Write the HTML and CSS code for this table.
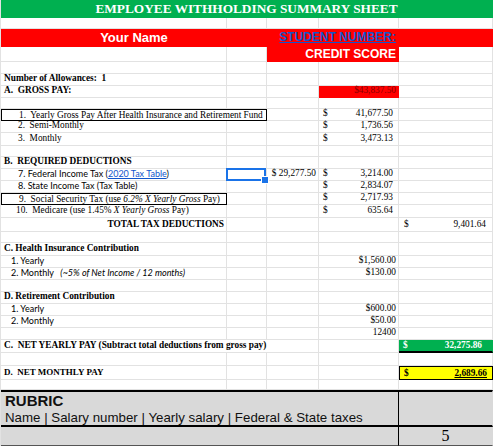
FILE: index.html
```html
<!DOCTYPE html>
<html>
<head>
<meta charset="utf-8">
<title>Employee Withholding Summary Sheet</title>
<link rel="stylesheet" href="styles.css">
</head>
<body>
<div class="sheet">
  <!-- R1 -->
  <div class="c title s5">EMPLOYEE WITHHOLDING SUMMARY SHEET</div>
  <!-- R2 -->
  <div class="c"></div><div class="c"></div><div class="c"></div><div class="c"></div><div class="c"></div>
  <!-- R3 -->
  <div class="c red s2 name">Your Name</div>
  <div class="c red s2 student"><span class="slink">STUDENT NUMBER:</span></div>
  <div class="c red"></div>
  <!-- R4 -->
  <div class="c"></div><div class="c"></div>
  <div class="c red s2 credit">CREDIT SCORE</div>
  <div class="c"></div>
  <!-- R5 -->
  <div class="c"></div><div class="c"></div><div class="c"></div><div class="c"></div><div class="c"></div>
  <!-- R6 -->
  <div class="c b">Number of Allowances:&nbsp; 1</div><div class="c"></div><div class="c"></div><div class="c"></div><div class="c"></div>
  <!-- R7 -->
  <div class="c b">A.&nbsp; GROSS PAY:</div><div class="c"></div><div class="c"></div>
  <div class="c red num gross">$43,837.50</div><div class="c"></div>
  <!-- R8 -->
  <div class="c"></div><div class="c"></div><div class="c"></div><div class="c"></div><div class="c"></div>
  <!-- R9 -->
  <div class="c s2 box in">1.&nbsp; Yearly Gross Pay After Health Insurance and Retirement Fund</div>
  <div class="c"></div>
  <div class="c acc"><span>$</span><span>41,677.50</span></div><div class="c"></div>
  <!-- R10 -->
  <div class="c in">2.&nbsp; Semi-Monthly</div><div class="c"></div><div class="c"></div>
  <div class="c acc"><span>$</span><span>1,736.56</span></div><div class="c"></div>
  <!-- R11 -->
  <div class="c in">3.&nbsp; Monthly</div><div class="c"></div><div class="c"></div>
  <div class="c acc"><span>$</span><span>3,473.13</span></div><div class="c"></div>
  <!-- R12 -->
  <div class="c"></div><div class="c"></div><div class="c"></div><div class="c"></div><div class="c"></div>
  <!-- R13 -->
  <div class="c b">B.&nbsp; REQUIRED DEDUCTIONS</div><div class="c"></div><div class="c"></div><div class="c"></div><div class="c"></div>
  <!-- R14 -->
  <div class="c sans in"><span>7. Federal Income Tax (<span class="link">2020 Tax Table</span>)</span></div>
  <div class="c sel"></div>
  <div class="c num">$ 29,277.50</div>
  <div class="c acc"><span>$</span><span>3,214.00</span></div><div class="c"></div>
  <!-- R15 -->
  <div class="c sans in">8. State Income Tax (Tax Table)</div><div class="c"></div><div class="c"></div>
  <div class="c acc"><span>$</span><span>2,834.07</span></div><div class="c"></div>
  <!-- R16 -->
  <div class="c box in"><span>9.&nbsp; Social Security Tax (use <i>6.2% X Yearly Gross</i> Pay)</span></div><div class="c"></div><div class="c"></div>
  <div class="c acc"><span>$</span><span>2,717.93</span></div><div class="c"></div>
  <!-- R17 -->
  <div class="c in10"><span>10.&nbsp; Medicare (use 1.45% <i>X Yearly Gross</i> Pay)</span></div><div class="c"></div><div class="c"></div>
  <div class="c acc"><span>$</span><span>635.64</span></div><div class="c"></div>
  <!-- R18 -->
  <div class="c b num">TOTAL TAX DEDUCTIONS</div><div class="c"></div><div class="c"></div><div class="c"></div>
  <div class="c acc acce"><span>$</span><span>9,401.64</span></div>
  <!-- R19 -->
  <div class="c"></div><div class="c"></div><div class="c"></div><div class="c"></div><div class="c"></div>
  <!-- R20 -->
  <div class="c b">C. Health Insurance Contribution</div><div class="c"></div><div class="c"></div><div class="c"></div><div class="c"></div>
  <!-- R21 -->
  <div class="c sans inh">1. Yearly</div><div class="c"></div><div class="c"></div>
  <div class="c num">$1,560.00</div><div class="c"></div>
  <!-- R22 -->
  <div class="c sans inh"><span>2. Monthly&nbsp; <i class="note">(~5% of Net Income / 12 months)</i></span></div><div class="c"></div><div class="c"></div>
  <div class="c num">$130.00</div><div class="c"></div>
  <!-- R23 -->
  <div class="c"></div><div class="c"></div><div class="c"></div><div class="c"></div><div class="c"></div>
  <!-- R24 -->
  <div class="c b">D. Retirement Contribution</div><div class="c"></div><div class="c"></div><div class="c"></div><div class="c"></div>
  <!-- R25 -->
  <div class="c sans inh">1. Yearly</div><div class="c"></div><div class="c"></div>
  <div class="c num">$600.00</div><div class="c"></div>
  <!-- R26 -->
  <div class="c sans inh">2. Monthly</div><div class="c"></div><div class="c"></div>
  <div class="c num">$50.00</div><div class="c"></div>
  <!-- R27 -->
  <div class="c"></div><div class="c"></div><div class="c"></div>
  <div class="c num">12400</div><div class="c"></div>
  <!-- R28 -->
  <div class="c s3 b">C.&nbsp; NET YEARLY PAY (Subtract total deductions from gross pay)</div>
  <div class="c"></div>
  <div class="c acc green"><span>$</span><span>32,275.86</span></div>
  <!-- R29 -->
  <div class="c"></div><div class="c"></div><div class="c"></div><div class="c"></div><div class="c"></div>
  <!-- R30 -->
  <div class="c b small">D.&nbsp; NET MONTHLY PAY</div><div class="c"></div><div class="c"></div><div class="c"></div>
  <div class="c acc yellow"><span>$</span><span class="u">2,689.66</span></div>
  <!-- R31 -->
  <div class="c"></div><div class="c"></div><div class="c"></div><div class="c"></div><div class="c"></div>
  <!-- R32 -->
  <div class="c s4 rub">
    <span class="rt">RUBRIC</span>
    <span class="rs">Name | Salary number | Yearly salary | Federal &amp; State taxes</span>
  </div>
  <div class="c rube"></div>
  <!-- R33 -->
  <div class="c s4 grayl"></div>
  <div class="c grayr score">5</div>
</div>
</body>
</html>
```
FILE: styles.css
```css
* {
  box-sizing: border-box;
  margin: 0;
  padding: 0;
}

body {
  margin: 0;
  background: #fff;
  color: #000;
  font-family: "Liberation Serif", "Times New Roman", serif;
}

.sheet {
  display: grid;
  grid-template-columns: 226px 40px 52px 80px 94px;
  grid-template-rows: 18px 11px 18px 15px 12px 12px 12px 11px 12px 12px 13px 11px 12px 12px 12px 12px 13px 14px 11px 13px 12px 12px 12px 12px 12px 12px 12px 13px 13px 14px 10px 37px 19px;
  width: 493px;
  border-left: 1px solid #e2e2e2;
}

.c {
  display: flex;
  align-items: flex-end;
  min-width: 0;
  padding: 0 2px 1px 3px;
  border-right: 1px solid #e2e2e2;
  border-bottom: 1px solid #e2e2e2;
  font-size: 9.3px;
  line-height: 11px;
  white-space: nowrap;
}

.s2 { grid-column: span 2; }
.s3 { grid-column: span 3; }
.s4 { grid-column: span 4; }
.s5 { grid-column: span 5; }

.title {
  justify-content: center;
  align-items: center;
  padding: 0;
  background: #00b050;
  border-color: #00b050;
  color: #fff;
  font-weight: bold;
  font-size: 13.3px;
  line-height: 15px;
}

.red {
  background: #ff0000;
  border-color: #ff0000;
}

.name {
  justify-content: center;
  align-items: center;
  color: #fff;
  font: bold 13px/15px "Liberation Sans", Arial, sans-serif;
}

.student {
  justify-content: flex-end;
  align-items: center;
  font: bold 12px/14px "Liberation Sans", Arial, sans-serif;
}

.slink {
  color: #1155cc;
  text-decoration: underline;
}

.credit {
  justify-content: flex-end;
  align-items: center;
  color: #fff;
  font: bold 12px/14px "Liberation Sans", Arial, sans-serif;
}

.b { font-weight: bold; }

.num { justify-content: flex-end; }

.gross { color: #8a0000; }

.in { padding-left: 17px; }
.in10 { padding-left: 15px; }
.inh { padding-left: 10px; }

.sans {
  font-family: Lato, "Liberation Sans", sans-serif;
  font-size: 9px;
}

.note {
  font-size: 9px;
  margin-left: 2px;
}

.link {
  color: #1155cc;
  text-decoration: underline;
}

.box {
  border: 1px solid #000;
  padding-bottom: 0;
  line-height: 10px;
}

.acc {
  justify-content: space-between;
  padding: 0 5px 1px 4px;
}

.acce { padding: 0 6px 1px 5px; }

.sel { position: relative; }

.sel::after {
  content: "";
  position: absolute;
  left: -1px;
  top: -1px;
  right: 0;
  bottom: -1px;
  border: 2px solid #1a73e8;
}

.sel::before {
  content: "";
  position: absolute;
  right: -3px;
  bottom: -4px;
  width: 6px;
  height: 6px;
  background: #1a73e8;
  border: 1px solid #fff;
  z-index: 1;
}

.green {
  background: #00b050;
  border-right-color: #00b050;
  border-bottom: 2px solid #000;
  color: #fff;
  font-weight: bold;
  padding: 0 10px 0 4px;
}

.small { font-size: 9px; }

.yellow {
  background: #ffff00;
  border: 1px solid #000;
  font-weight: bold;
  padding: 0 5px 0 4px;
}

.u { text-decoration: underline; }

.rub {
  flex-direction: column;
  justify-content: flex-end;
  align-items: flex-start;
  padding: 0 0 0 4px;
  background: #d9d9d9;
  border-top: 2px solid #000;
  border-bottom: 2px solid #000;
  border-right: 1px solid #000;
  font-family: "Liberation Sans", Arial, sans-serif;
  color: #111;
}

.rt {
  font: bold 15px/17px "Liberation Sans", Arial, sans-serif;
}

.rs {
  margin-top: 1px;
  margin-bottom: -1px;
  font: 13.3px/16px "Liberation Sans", Arial, sans-serif;
}

.rube {
  background: #d9d9d9;
  border-top: 2px solid #000;
  border-bottom: 2px solid #000;
  border-right-color: #d9d9d9;
}

.grayl {
  background: #d9d9d9;
  border-right: 1px solid #000;
  border-bottom: 1px solid #555;
}

.grayr {
  background: #d9d9d9;
  border-right-color: #d9d9d9;
  border-bottom: 1px solid #555;
}

.score {
  justify-content: center;
  align-items: center;
  padding: 0;
  font-size: 16px;
  line-height: 18px;
}
```
